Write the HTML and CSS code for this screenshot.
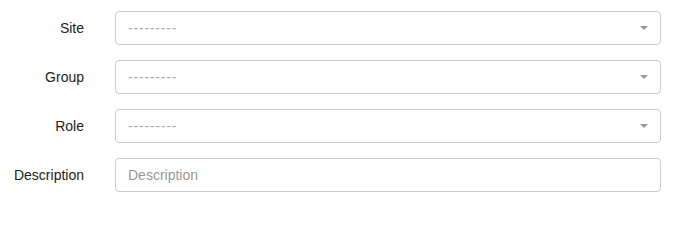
FILE: index.html
```html
<!DOCTYPE html>
<html>
<head>
<meta charset="utf-8">
<link rel="stylesheet" href="styles.css">
</head>
<body>
<form class="form">
  <div class="row">
    <label class="label">Site</label>
    <div class="select"><span class="placeholder">---------</span><span class="arrow"></span></div>
  </div>
  <div class="row">
    <label class="label">Group</label>
    <div class="select"><span class="placeholder">---------</span><span class="arrow"></span></div>
  </div>
  <div class="row">
    <label class="label">Role</label>
    <div class="select"><span class="placeholder">---------</span><span class="arrow"></span></div>
  </div>
  <div class="row">
    <label class="label">Description</label>
    <input class="input" type="text" placeholder="Description">
  </div>
</form>
</body>
</html>
```
FILE: styles.css
```css
html, body {
  margin: 0;
  padding: 0;
  background: #fff;
}
body {
  font-family: "Liberation Sans", Arial, sans-serif;
  font-size: 14px;
  color: #333;
}
.form {
  display: flex;
  flex-direction: column;
  gap: 15px;
  padding: 11px 12px 0 0;
}
.row {
  display: grid;
  grid-template-columns: 84px 546px;
  column-gap: 31px;
  align-items: center;
  height: 34px;
}
.label {
  text-align: right;
  color: #222;
  font-size: 14px;
}
.select, .input {
  box-sizing: border-box;
  height: 34px;
  width: 546px;
  border: 1px solid #ccc;
  border-radius: 4px;
  background: #fff;
  font-family: "Liberation Sans", Arial, sans-serif;
  font-size: 14px;
}
.select {
  display: flex;
  align-items: center;
  justify-content: space-between;
  padding: 0 12px 0 12px;
}
.placeholder {
  color: #aaa;
  letter-spacing: 0.8px;
}
.arrow {
  width: 0;
  height: 0;
  border-left: 4px solid transparent;
  border-right: 4px solid transparent;
  border-top: 4px solid #999;
  margin-right: 0;
}
.input {
  padding: 0 12px;
  color: #555;
  outline: none;
}
.input::placeholder {
  color: #999;
}
```
